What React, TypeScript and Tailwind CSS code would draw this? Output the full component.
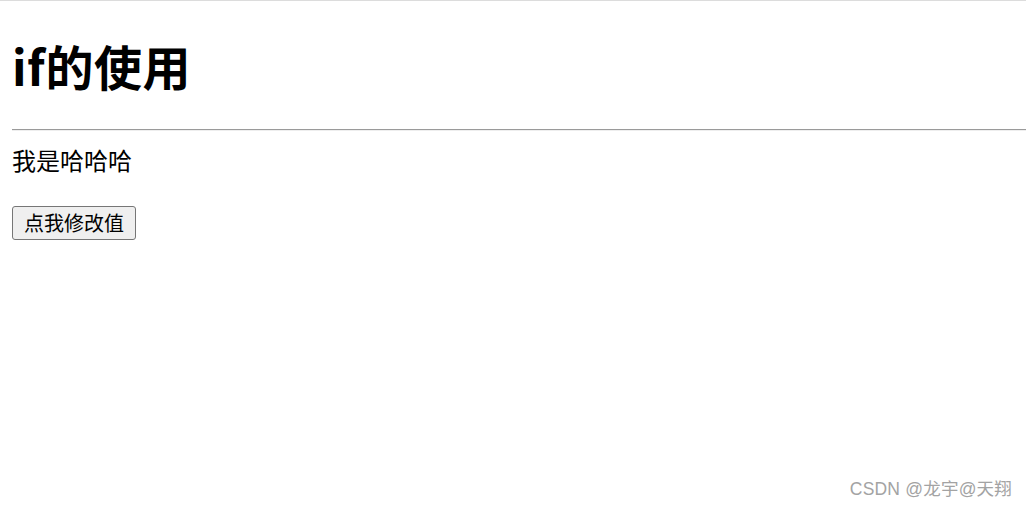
export default function App() {
  const cjk = { fontFamily: '"Noto Sans CJK SC", "Noto Sans", sans-serif' };
  return (
    <div className="relative w-[1026px] h-[508px] bg-white border-t border-[#dcdcdc] overflow-hidden text-black" style={cjk}>
      <div className="pl-[12px] pt-[32px]">
        <h1 className="text-[48px] font-bold leading-[64px] tracking-[0.5px]">if的使用</h1>
        <div className="mt-[32px] h-[2px] border-t border-t-[#9a9a9a] border-b border-b-[#eeeeee]" />
        <p className="mt-[13px] text-[24px] leading-[32px]">我是哈哈哈</p>
        <button className="mt-[30px] h-[34px] px-[11px] text-[20px] leading-[26px] bg-[#efefef] border border-[#767676] rounded-[3px]">点我修改值</button>
      </div>
      <div
        className="absolute right-[14px] bottom-[8px] text-[17.5px] leading-[22px] text-[#a3a3a3] tracking-[0.2px]"
        style={{ fontFamily: '"Liberation Sans", "Noto Sans CJK SC", sans-serif' }}
      >
        CSDN @龙宇@天翔
      </div>
    </div>
  );
}
